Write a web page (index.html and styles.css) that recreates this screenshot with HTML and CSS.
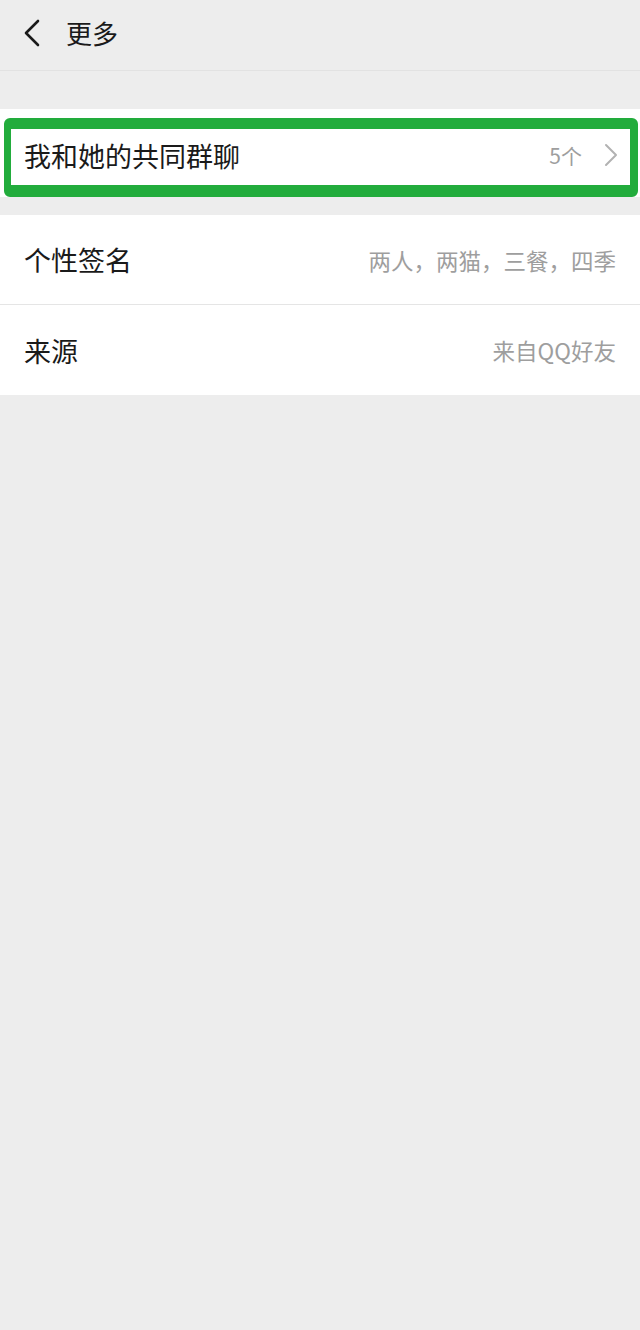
FILE: index.html
```html
<!DOCTYPE html>
<html lang="zh-CN">
<head>
<meta charset="UTF-8" />
<meta name="viewport" content="width=device-width, initial-scale=1" />
<title>更多</title>
<link rel="stylesheet" href="styles.css">
</head>
<body>
  <div class="topbar">
    <svg class="back" width="20" height="28" viewBox="0 0 20 28">
      <path d="M16 2 L4 14 L16 26" fill="none" stroke="#1a1a1a" stroke-width="2.6" stroke-linecap="round" stroke-linejoin="round"/>
    </svg>
    <span class="title">更多</span>
  </div>

  <div class="group group-first">
    <div class="cell cell-marked">
      <span class="label">我和她的共同群聊</span>
      <span class="value">5个</span>
      <svg class="arrow" width="14" height="24" viewBox="0 0 14 24">
        <path d="M2 2 L12 12 L2 22" fill="none" stroke="#b2b2b2" stroke-width="2" stroke-linecap="round" stroke-linejoin="round"/>
      </svg>
    </div>
  </div>

  <div class="group">
    <div class="cell">
      <span class="label">个性签名</span>
      <span class="value">两人，两猫，三餐，四季</span>
    </div>
    <div class="cell">
      <span class="label">来源</span>
      <span class="value">来自QQ好友</span>
    </div>
  </div>
</body>
</html>
```

FILE: styles.css
```css
body {
  margin: 0;
  background: #ededed;
  font-family: "Noto Sans CJK SC", "Noto Sans", sans-serif;
  color: #1a1a1a;
  min-height: 1330px;
}
.topbar {
  height: 71px;
  display: flex;
  align-items: center;
  padding-left: 22px;
  border-bottom: 1px solid #e2e2e2;
  box-sizing: border-box;
}
.back {
  margin-top: -4px;
}
.title {
  font-size: 26px;
  margin-left: 24px;
  margin-top: -6px;
}
.group {
  background: #fff;
  margin-top: 18px;
}
.group-first {
  margin-top: 38px;
  padding-top: 9px;
}
.cell {
  height: 90px;
  display: flex;
  align-items: center;
  padding: 0 24px;
  border-bottom: 1px solid #e5e5e5;
  box-sizing: border-box;
}
.cell:last-child {
  border-bottom: none;
}
.label {
  font-size: 27px;
  flex: 1;
}
.value {
  font-size: 22.5px;
  color: #9e9e9e;
}
/* zielona ramka – adnotacja na zrzucie */
.group .cell-marked {
  height: 79px;
  margin-left: 4px;
  margin-right: 2px;
  padding: 0 12px 0 13px;
  border-style: solid;
  border-color: #22ac3c;
  border-width: 11px 8px 12px 7px;
  border-radius: 6px;
}
.cell-marked .label {
  margin-top: -4px;
}
.cell-marked .value {
  font-size: 21px;
  margin-top: -4px;
}
.arrow {
  margin-left: 22px;
  margin-top: -4px;
}
```
